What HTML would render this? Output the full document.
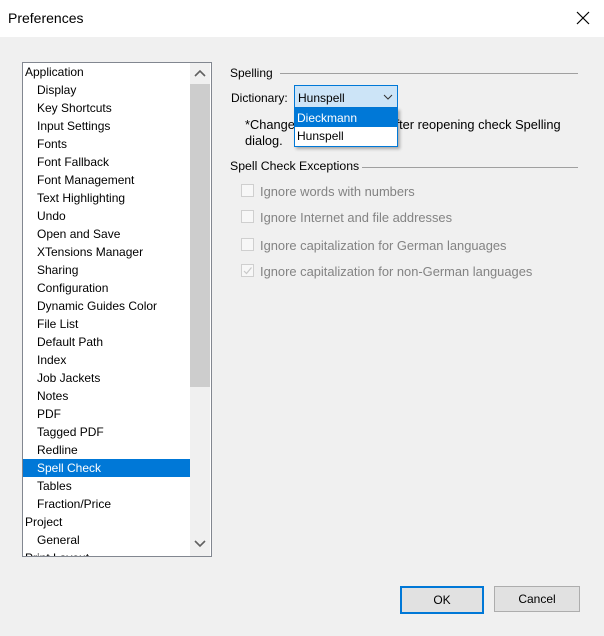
<!DOCTYPE html>
<html><head><style>
body{margin:0;width:604px;height:636px;background:#f0f0f0;font-family:"Liberation Sans",sans-serif;font-size:12px;color:#000;position:relative;overflow:hidden}
.a{position:absolute;white-space:nowrap}
#title{left:0;top:0;width:604px;height:37px;background:#fff}
#list{left:22px;top:62px;width:188px;height:493px;border:1px solid #828790;background:#fff;overflow:hidden}
.r{position:absolute;left:0;width:167px;height:18px;line-height:18px}
.sel{background:#0078d7;color:#fff}
.cb{position:absolute;width:11px;height:11px;border:1px solid #cfcfcf;background:#f7f7f7}
.g{color:#838383;font-size:12.9px}
.btn{position:absolute;height:24px;line-height:24px;text-align:center;background:#e1e1e1;border:1px solid #adadad}
</style></head><body>
<div class="a" id="title"></div>
<div class="a" style="left:8px;top:10px;font-size:14px">Preferences</div>
<svg class="a" style="left:576px;top:11px" width="14" height="14"><path d="M1 1L13 13M13 1L1 13" stroke="#000" stroke-width="1.2"/></svg>

<div class="a" id="list">
<div class="r" style="top:0;padding-left:2px">Application</div>
<div class="r" style="top:18px;padding-left:14px">Display</div>
<div class="r" style="top:36px;padding-left:14px">Key Shortcuts</div>
<div class="r" style="top:54px;padding-left:14px">Input Settings</div>
<div class="r" style="top:72px;padding-left:14px">Fonts</div>
<div class="r" style="top:90px;padding-left:14px">Font Fallback</div>
<div class="r" style="top:108px;padding-left:14px">Font Management</div>
<div class="r" style="top:126px;padding-left:14px">Text Highlighting</div>
<div class="r" style="top:144px;padding-left:14px">Undo</div>
<div class="r" style="top:162px;padding-left:14px">Open and Save</div>
<div class="r" style="top:180px;padding-left:14px">XTensions Manager</div>
<div class="r" style="top:198px;padding-left:14px">Sharing</div>
<div class="r" style="top:216px;padding-left:14px">Configuration</div>
<div class="r" style="top:234px;padding-left:14px">Dynamic Guides Color</div>
<div class="r" style="top:252px;padding-left:14px">File List</div>
<div class="r" style="top:270px;padding-left:14px">Default Path</div>
<div class="r" style="top:288px;padding-left:14px">Index</div>
<div class="r" style="top:306px;padding-left:14px">Job Jackets</div>
<div class="r" style="top:324px;padding-left:14px">Notes</div>
<div class="r" style="top:342px;padding-left:14px">PDF</div>
<div class="r" style="top:360px;padding-left:14px">Tagged PDF</div>
<div class="r" style="top:378px;padding-left:14px">Redline</div>
<div class="r sel" style="top:396px;padding-left:14px;width:153px">Spell Check</div>
<div class="r" style="top:414px;padding-left:14px">Tables</div>
<div class="r" style="top:432px;padding-left:14px">Fraction/Price</div>
<div class="r" style="top:450px;padding-left:2px">Project</div>
<div class="r" style="top:468px;padding-left:14px">General</div>
<div class="r" style="top:486px;padding-left:2px">Print Layout</div>
<div style="position:absolute;left:167px;top:0;width:20px;height:493px;background:#f0f0f0"></div>
<div style="position:absolute;left:167px;top:21px;width:20px;height:303px;background:#cdcdcd"></div>
<svg style="position:absolute;left:171px;top:6px" width="12" height="8"><path d="M1 7L6 2L11 7" stroke="#606060" stroke-width="1.6" fill="none"/></svg>
<svg style="position:absolute;left:171px;top:477px" width="12" height="8"><path d="M1 1L6 6L11 1" stroke="#606060" stroke-width="1.6" fill="none"/></svg>
</div>

<div class="a" style="left:230px;top:66px">Spelling</div>
<div class="a" style="left:280px;top:73px;width:298px;height:1px;background:#a0a0a0"></div>
<div class="a" style="left:231px;top:91px">Dictionary:</div>
<div class="a" style="left:294px;top:85px;width:102px;height:21px;border:1px solid #0078d7;background:#cce4f7"></div>
<div class="a" style="left:298px;top:91px">Hunspell</div>
<svg class="a" style="left:383px;top:94px" width="10" height="6"><path d="M1 1L5 5L9 1" stroke="#333" fill="none"/></svg>
<div class="a" style="left:245px;top:117px;font-size:12.8px">*Changes will take effect after reopening check Spelling</div>
<div class="a" style="left:245px;top:133px;font-size:12.8px">dialog.</div>
<div class="a" style="left:294px;top:108px;width:102px;height:37px;border:1px solid #0078d7;background:#fff;box-shadow:2px 2px 3px rgba(0,0,0,.3)">
<div style="position:absolute;left:0;top:0;width:102px;height:18px;background:#0078d7;color:#fff;line-height:18px;padding-left:2px;box-sizing:border-box">Dieckmann</div>
<div style="position:absolute;left:2px;top:18px;line-height:18px">Hunspell</div>
</div>

<div class="a" style="left:230px;top:159px;font-size:12.3px">Spell Check Exceptions</div>
<div class="a" style="left:362px;top:167px;width:216px;height:1px;background:#a0a0a0"></div>
<div class="cb" style="left:241px;top:184px"></div><div class="a g" style="left:260px;top:184px">Ignore words with numbers</div>
<div class="cb" style="left:241px;top:210px"></div><div class="a g" style="left:260px;top:210px">Ignore Internet and file addresses</div>
<div class="cb" style="left:241px;top:238px"></div><div class="a g" style="left:260px;top:238px">Ignore capitalization for German languages</div>
<div class="cb" style="left:241px;top:264px"></div><div class="a g" style="left:260px;top:264px">Ignore capitalization for non-German languages</div>
<svg class="a" style="left:242px;top:265px" width="11" height="11"><path d="M2 6L4.5 8.5L9.5 2.5" stroke="#c8c8c8" stroke-width="1.2" fill="none"/></svg>

<div class="btn" style="left:400px;top:586px;width:80px;border:2px solid #0078d7">OK</div>
<div class="btn" style="left:494px;top:586px;width:84px">Cancel</div>
</body></html>
